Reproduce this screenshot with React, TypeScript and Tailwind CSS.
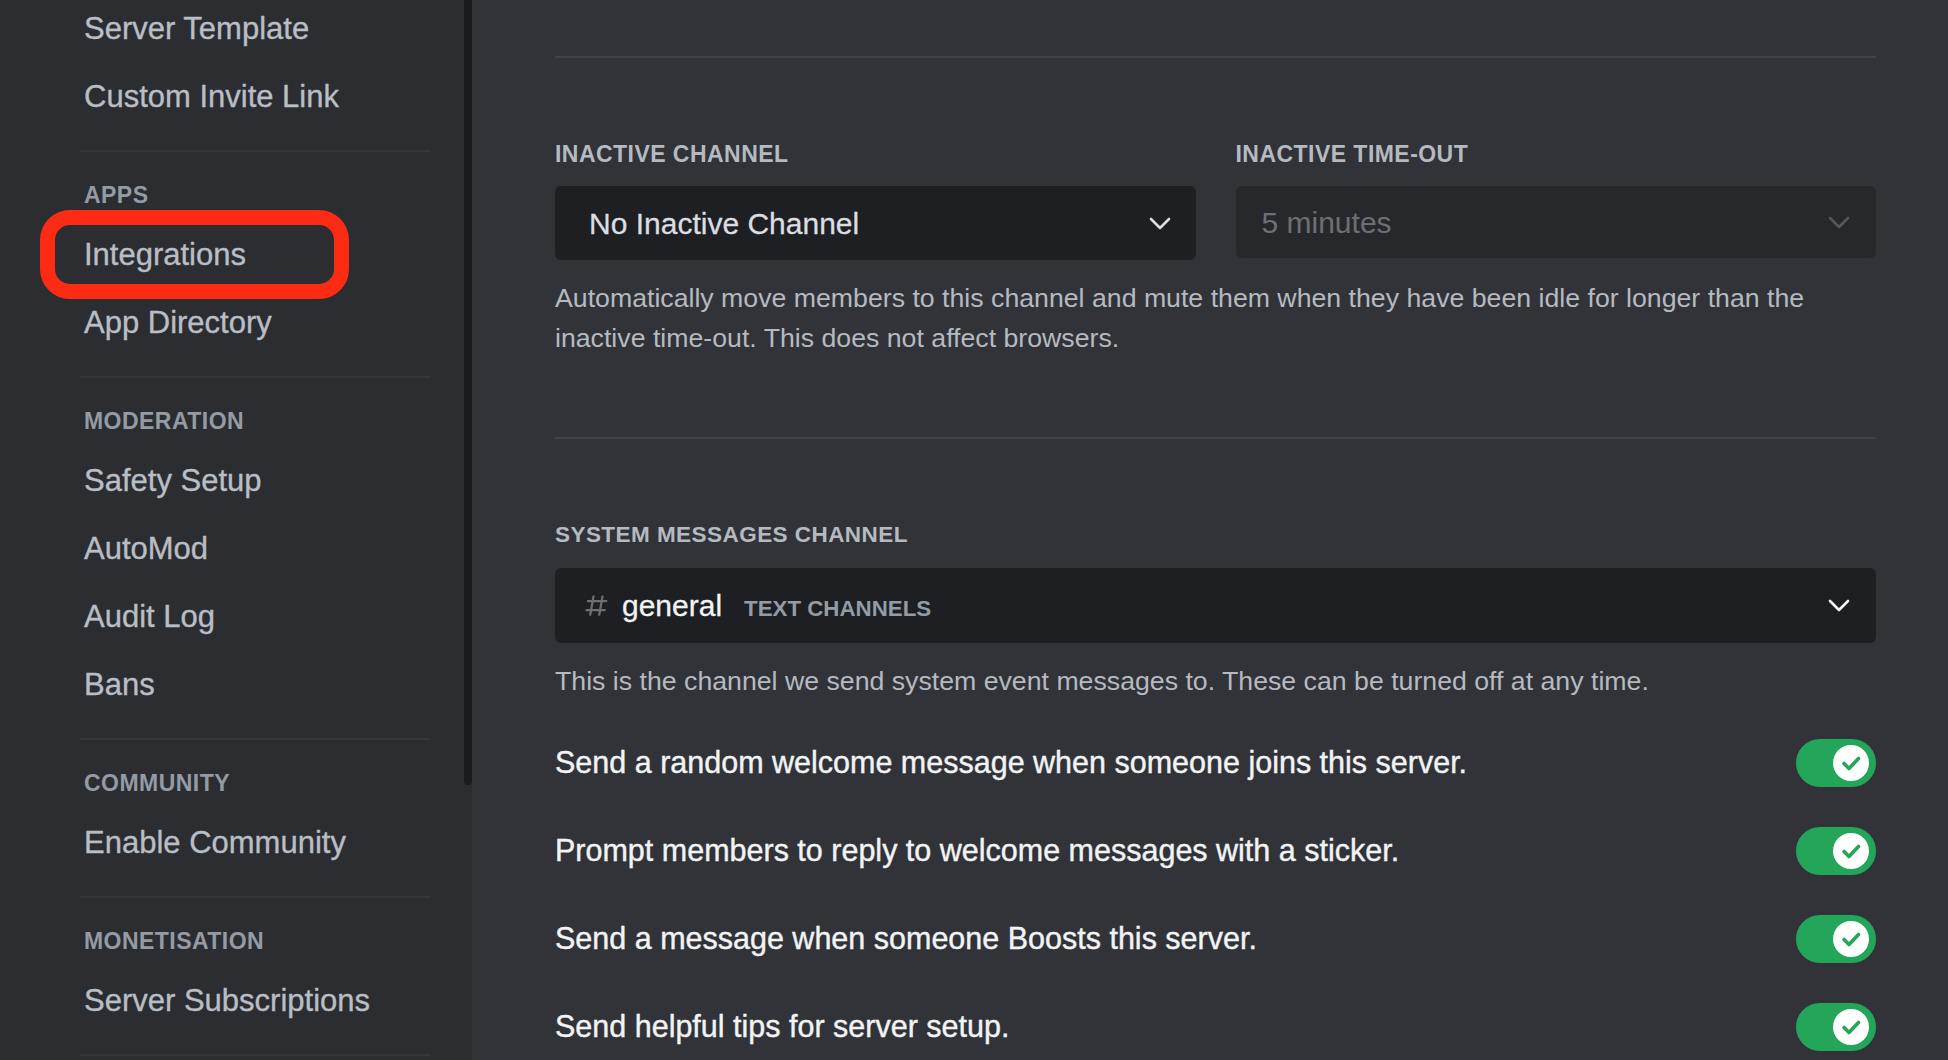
import React from 'react'

type Section = { header?: string; items: string[] }

const sections: Section[] = [
  { items: ['Server Template', 'Custom Invite Link'] },
  { header: 'APPS', items: ['Integrations', 'App Directory'] },
  { header: 'MODERATION', items: ['Safety Setup', 'AutoMod', 'Audit Log', 'Bans'] },
  { header: 'COMMUNITY', items: ['Enable Community'] },
  { header: 'MONETISATION', items: ['Server Subscriptions'] },
]

const toggles = [
  'Send a random welcome message when someone joins this server.',
  'Prompt members to reply to welcome messages with a sticker.',
  'Send a message when someone Boosts this server.',
  'Send helpful tips for server setup.',
]

function Chevron({ color }: { color: string }) {
  return (
    <svg width="22" height="13" viewBox="0 0 22 13" fill="none">
      <polyline
        points="2,2 11,11 20,2"
        stroke={color}
        strokeWidth="2.6"
        strokeLinecap="round"
        strokeLinejoin="round"
      />
    </svg>
  )
}

function Toggle() {
  return (
    <div className="relative w-[80px] h-[48px] rounded-full bg-[#23a55a] shrink-0">
      <div className="absolute right-[7px] top-[6px] w-[36px] h-[36px] rounded-full bg-white flex items-center justify-center">
        <svg width="36" height="36" viewBox="0 0 36 36" fill="none">
          <polyline
            points="11,18.5 16,23.5 25.5,13.5"
            stroke="#23a55a"
            strokeWidth="3.6"
            strokeLinecap="round"
            strokeLinejoin="round"
          />
        </svg>
      </div>
    </div>
  )
}

function Sidebar() {
  return (
    <aside className="relative w-[472px] shrink-0 h-full bg-[#2b2d31] overflow-hidden">
      <nav className="ml-[80px] w-[350px] -mt-[5px]">
        {sections.map((s, i) => (
          <div key={i}>
            {s.header && (
              <div className="mt-[29px] h-[28px] leading-[28px] pl-[4px] text-[23px] font-bold tracking-[0.02em] text-[#949ba4]">
                {s.header}
              </div>
            )}
            <div className={s.header ? 'mt-[12px]' : ''}>
              {s.items.map((item) => (
                <div
                  key={item}
                  className="relative h-[68px] flex items-center pl-[4px] text-[31px] font-medium text-[#b9bec5] [-webkit-text-stroke:0.35px_#b9bec5]"
                >
                  {item}
                  {item === 'Integrations' && (
                    <div className="absolute -left-[40px] -top-[11px] w-[309px] h-[89px] rounded-[30px] border-[15px] border-[#fc2b13]" />
                  )}
                </div>
              ))}
            </div>
            <div className="mt-[19px] h-[2px] bg-[#35373c]" />
          </div>
        ))}
      </nav>
      {/* scrollbar thumb */}
      <div className="absolute left-[464px] top-0 w-[8px] h-[785px] rounded-b-[4px] bg-[#1a1b1e]" />
    </aside>
  )
}

export default function App() {
  return (
    <div className="flex w-full h-[1060px] overflow-hidden font-['Liberation_Sans',Arial,sans-serif]">
      <Sidebar />

      <main className="flex-1 h-full bg-[#313338] pl-[83px] pr-[72px] overflow-hidden">
        <div className="mt-[56px] h-[2px] bg-[#3f4147]" />

        {/* Inactive channel / time-out */}
        <div className="mt-[81px] grid grid-cols-2 gap-[40px]">
          <div>
            <div className="h-[30px] leading-[30px] text-[23px] font-bold tracking-[0.02em] text-[#b5bac1]">
              INACTIVE CHANNEL
            </div>
            <div className="mt-[17px] h-[74px] rounded-[6px] bg-[#1e1f22] flex items-center justify-between pl-[34px] pr-[25px]">
              <span className="text-[30px] text-[#dbdee1] [-webkit-text-stroke:0.3px_#dbdee1]">No Inactive Channel</span>
              <Chevron color="#dbdee1" />
            </div>
          </div>
          <div>
            <div className="h-[30px] leading-[30px] text-[23px] font-bold tracking-[0.02em] text-[#b5bac1]">
              INACTIVE TIME-OUT
            </div>
            <div className="mt-[17px] h-[72px] rounded-[6px] bg-[#27282c] flex items-center justify-between pl-[26px] pr-[26px]">
              <span className="text-[30px] text-[#6d6f75]">5 minutes</span>
              <Chevron color="#55575d" />
            </div>
          </div>
        </div>
        <p className="mt-[18px] text-[26.7px] leading-[40px] text-[#b5bac1]">
          Automatically move members to this channel and mute them when they have been idle for longer than the
          inactive time-out. This does not affect browsers.
        </p>

        <div className="mt-[79px] h-[2px] bg-[#3f4147]" />

        {/* System messages */}
        <div className="mt-[81px] h-[30px] leading-[30px] text-[22.5px] font-bold tracking-[0.02em] text-[#b5bac1]">
          SYSTEM MESSAGES CHANNEL
        </div>
        <div className="mt-[18px] h-[75px] rounded-[6px] bg-[#1e1f22] flex items-center justify-between pl-[28px] pr-[26px]">
          <div className="flex items-center">
            <svg width="27" height="27" viewBox="0 0 24 24" fill="#6d6f78">
              <path d="M5.88657 21C5.57547 21 5.3399 20.7189 5.39427 20.4126L6.00001 17H2.59511C2.28449 17 2.04905 16.7198 2.10259 16.4138L2.27759 15.4138C2.31946 15.1746 2.52722 15 2.77011 15H6.35001L7.41001 9H4.00511C3.69449 9 3.45905 8.71977 3.51259 8.41381L3.68759 7.41381C3.72946 7.17456 3.93722 7 4.18011 7H7.76001L8.39677 3.41262C8.43914 3.17391 8.64664 3 8.88907 3H9.87344C10.1845 3 10.4201 3.28107 10.3657 3.58738L9.76001 7H15.76L16.3968 3.41262C16.4391 3.17391 16.6466 3 16.8891 3H17.8734C18.1845 3 18.4201 3.28107 18.3657 3.58738L17.76 7H21.1649C21.4755 7 21.711 7.28023 21.6574 7.58619L21.4824 8.58619C21.4406 8.82544 21.2328 9 20.9899 9H17.41L16.35 15H19.7549C20.0655 15 20.301 15.2802 20.2474 15.5862L20.0724 16.5862C20.0306 16.8254 19.8228 17 19.5799 17H16L15.3632 20.5874C15.3209 20.8261 15.1134 21 14.8709 21H13.8866C13.5755 21 13.3399 20.7189 13.3943 20.4126L14 17H8.00001L7.36325 20.5874C7.32088 20.8261 7.11337 21 6.87094 21H5.88657ZM9.41045 9L8.35045 15H14.3504L15.4104 9H9.41045Z" />
            </svg>
            <div className="ml-[12px] flex items-baseline">
              <span className="text-[30px] text-[#f2f3f5] [-webkit-text-stroke:0.3px_#f2f3f5]">general</span>
              <span className="ml-[22px] text-[22.3px] font-bold text-[#949ba4]">TEXT CHANNELS</span>
            </div>
          </div>
          <Chevron color="#f2f3f5" />
        </div>
        <p className="mt-[18px] text-[26.7px] leading-[40px] text-[#b5bac1]">
          This is the channel we send system event messages to. These can be turned off at any time.
        </p>

        <div className="mt-[18px]">
          {toggles.map((t) => (
            <div key={t} className="h-[88px] flex items-center justify-between">
              <span className="text-[30.5px] font-medium text-[#f2f3f5] [-webkit-text-stroke:0.4px_#f2f3f5]">{t}</span>
              <Toggle />
            </div>
          ))}
        </div>
      </main>
    </div>
  )
}
